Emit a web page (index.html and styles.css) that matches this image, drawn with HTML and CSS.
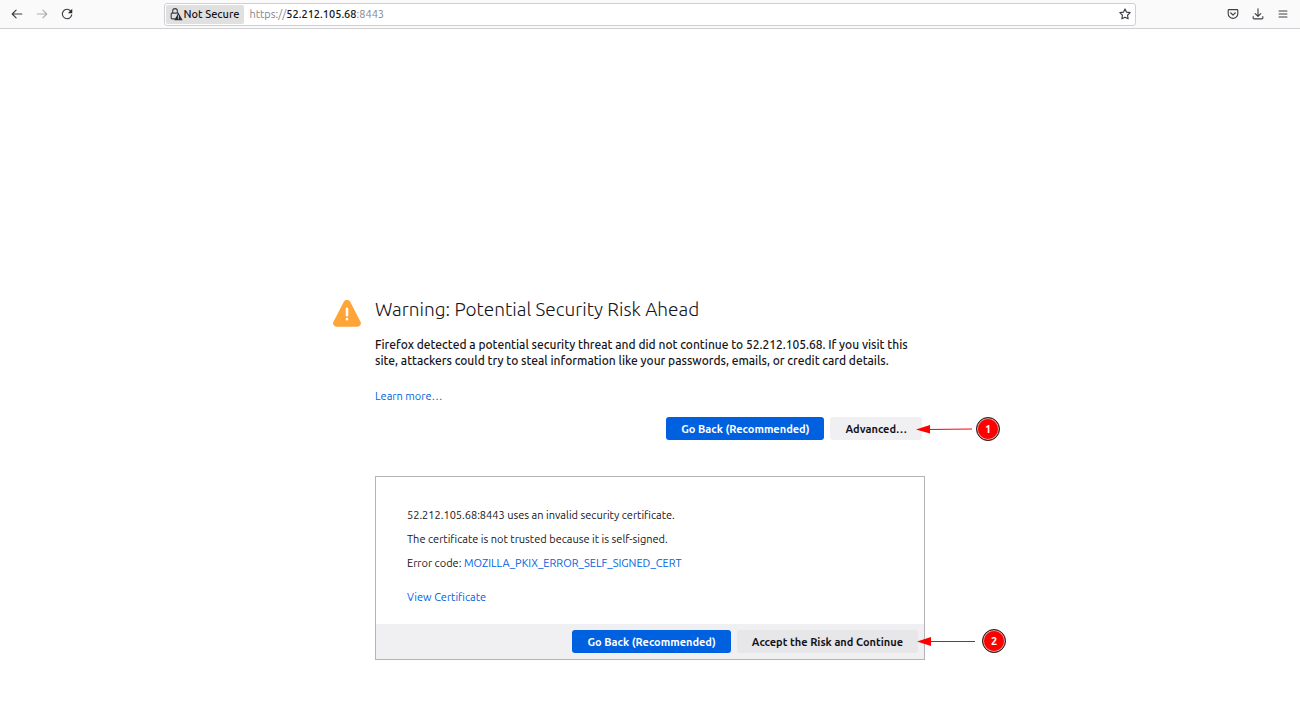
FILE: index.html
```html
<!DOCTYPE html>
<html lang="en">
<head>
    <meta charset="UTF-8" />
    <meta name="viewport" content="width=device-width, initial-scale=1" />
    <title>Warning: Potential Security Risk Ahead</title>
    <link rel="stylesheet" href="styles.css">
</head>
<body>
<header class="toolbar">
    <nav class="nav-buttons">
        <button type="button" class="icon-btn" aria-label="Back">
            <svg viewBox="0 0 16 16"><path d="M13.500 8H2.500M7 3.500 2.500 8 7 12.500"/></svg>
        </button>
        <button type="button" class="icon-btn" aria-label="Forward" disabled>
            <svg viewBox="0 0 16 16"><path d="M2.500 8h11M9 3.500 13.500 8 9 12.500"/></svg>
        </button>
        <button type="button" class="icon-btn" aria-label="Reload">
            <svg viewBox="0 0 16 16"><path d="M12.300 4.600A5.400 5.400 0 1 0 13.400 9"/><path class="solid" d="M14 2v5H9z"/></svg>
        </button>
    </nav>
    <div class="url-bar">
        <button type="button" class="identity">
            <svg viewBox="0 0 16 16">
                <path d="M7 13.500H3.500a1 1 0 0 1-1-1V8a1 1 0 0 1 1-1h7M4.200 7V4.500a2.700 2.700 0 0 1 5.400 0V7"/>
                <path class="solid" d="M10.800 6.500 15.600 15H6z"/>
                <path class="mark" d="M10.800 10v2M10.800 13.300v.2"/>
            </svg>
            Not Secure
        </button>
        <div class="url" role="textbox" aria-label="Address" contenteditable="true" spellcheck="false">https://<span class="host">52.212.105.68</span>:8443</div>
        <button type="button" class="icon-btn" aria-label="Bookmark this page">
            <svg viewBox="0 0 16 16"><path d="m8 2.200 1.800 3.700 4.100.6-3 2.900.7 4.100L8 11.600l-3.600 1.900.7-4.100-3-2.900 4.100-.6z"/></svg>
        </button>
    </div>
    <div class="tool-buttons">
        <button type="button" class="icon-btn" aria-label="Save to Pocket">
            <svg viewBox="0 0 16 16"><path d="M3.500 3h9a1 1 0 0 1 1 1v3.500a5.500 5.500 0 0 1-11 0V4a1 1 0 0 1 1-1zM5.300 6.600 8 9.200l2.700-2.600"/></svg>
        </button>
        <button type="button" class="icon-btn" aria-label="Downloads">
            <svg viewBox="0 0 16 16"><path d="M8 2v8.500M4.800 7.500 8 10.600l3.200-3.100M2.500 11v1.500a1 1 0 0 0 1 1h9a1 1 0 0 0 1-1V11"/></svg>
        </button>
        <button type="button" class="icon-btn" aria-label="Open menu">
            <svg viewBox="0 0 16 16"><path d="M3.500 4.600h9M3.500 8h9M3.500 11.400h9"/></svg>
        </button>
    </div>
</header>

<main class="error-page">
    <section class="intro">
        <svg class="warning-icon" viewBox="0 0 28 27" aria-hidden="true">
            <path class="triangle" d="M10.800 1.800a3.700 3.700 0 0 1 6.400 0l10.300 20a3.400 3.400 0 0 1-3 4.900H3.500a3.400 3.400 0 0 1-3-4.900z"/>
            <path class="bang" d="M14 8.900v6.400M14 19.100v.2"/>
        </svg>
        <h1>Warning: Potential Security Risk Ahead</h1>
        <p>Firefox detected a potential security threat and did not continue to 52.212.105.68. If you visit this site, attackers could try to steal information like your passwords, emails, or credit card details.</p>
        <a class="learn-more" href="#">Learn more…</a>
        <div class="buttons">
            <button type="button" class="btn primary">Go Back (Recommended)</button>
            <button type="button" class="btn">Advanced…</button>
            <div class="callout">
                <svg class="arrow" viewBox="0 0 56 10"><path class="shaft" d="M12 5.500 56 5"/><path class="head" d="M0 5.500 14 1v8.500z"/></svg>
                <span class="step">1</span>
            </div>
        </div>
    </section>

    <section class="advanced">
        <div class="details">
            <p>52.212.105.68:8443 uses an invalid security certificate.</p>
            <p>The certificate is not trusted because it is self-signed.</p>
            <p>Error code: <a href="#">MOZILLA_PKIX_ERROR_SELF_SIGNED_CERT</a></p>
            <a class="view-cert" href="#">View Certificate</a>
        </div>
        <div class="buttons">
            <button type="button" class="btn primary">Go Back (Recommended)</button>
            <button type="button" class="btn accept">Accept the Risk and Continue</button>
            <div class="callout">
                <svg class="arrow" viewBox="0 0 58 10"><path class="shaft" d="M12 5.500h46"/><path class="head" d="M0 5.500 14 1v9z"/></svg>
                <span class="step">2</span>
            </div>
        </div>
    </section>
</main>
</body>
</html>
```
FILE: styles.css
```css
* {
    box-sizing: border-box;
}
body {
    margin: 0;
    background-color: #fff;
    color: #15141a;
    font-family: Ubuntu, "Noto Sans", "Open Sans", sans-serif;
    font-size: 11px;
    line-height: 16px;
}
button {
    font: inherit;
    color: inherit;
    border: 0;
    cursor: pointer;
}
a {
    color: #0061e0;
    text-decoration: none;
}
a:hover {
    text-decoration: underline;
}
p {
    margin: 0;
}

.toolbar {
    display: flex;
    align-items: center;
    justify-content: space-between;
    height: 29px;
    padding: 0 10px;
    background-color: #fafafa;
    border-bottom: 1px solid #d0d0d4;
}
.nav-buttons, .tool-buttons {
    display: flex;
    gap: 11px;
}
.icon-btn {
    display: flex;
    padding: 0;
    background: none;
}
.icon-btn:disabled {
    opacity: 0.4;
}
.toolbar svg {
    width: 14px;
    height: 14px;
    fill: none;
    stroke: #3f3e48;
    stroke-width: 1.3;
    stroke-linecap: round;
    stroke-linejoin: round;
}
.toolbar .solid {
    fill: #2b2a33;
    stroke: none;
}
.toolbar .mark {
    stroke: #e0e0e1;
    stroke-width: 1;
}
.url-bar {
    display: flex;
    align-items: center;
    width: 76%;
    height: 23px;
    padding: 0 3px 0 1px;
    background-color: #fff;
    border: 1px solid #d0d0d4;
    border-radius: 3px;
}
.identity {
    display: flex;
    align-items: center;
    gap: 1px;
    height: 19px;
    padding: 0 5px 0 3px;
    background-color: #e0e0e1;
    border-radius: 2px;
    white-space: nowrap;
    font-weight: 500;
}
.url {
    flex: 1;
    margin-left: 5px;
    color: #85848c;
    outline: none;
}
.host {
    color: #15141a;
    font-weight: 500;
}

.error-page {
    width: 100%;
    max-width: 550px;
    margin: 0 auto;
    padding: 268px 0 50px;
}
.intro {
    position: relative;
}
.warning-icon {
    position: absolute;
    top: 3px;
    left: -42px;
    width: 28px;
    height: 27px;
}
.triangle {
    fill: #ffa436;
}
.bang {
    stroke: #fff;
    stroke-width: 2.6;
    stroke-linecap: round;
}
h1 {
    margin: 0;
    font-size: 19px;
    font-weight: 300;
    line-height: 24px;
}
.intro p {
    margin-top: 16px;
    padding-right: 8px;
    font-size: 12px;
    font-weight: 500;
}
.learn-more {
    display: inline-block;
    margin-top: 19px;
}
.buttons {
    position: relative;
    display: flex;
    justify-content: flex-end;
    gap: 6px;
    padding-right: 3px;
}
.intro .buttons {
    margin-top: 13px;
}
.btn {
    height: 23px;
    padding: 0 15px;
    background-color: #f0f0f2;
    border-radius: 3px;
    font-weight: 700;
    white-space: nowrap;
}
.btn.primary {
    background-color: #0061e0;
    color: #fff;
}
.btn.accept {
    background-color: #e7e7ea;
}
.callout {
    position: absolute;
    top: 0;
    left: calc(100% - 9px);
    display: flex;
    align-items: center;
    gap: 4px;
    height: 24px;
}
.arrow {
    width: 56px;
    height: 10px;
}
.shaft {
    stroke: #f00;
    stroke-width: 1;
}
.head {
    fill: #f00;
}
.step {
    width: 24px;
    height: 24px;
    border: 1px solid #222;
    border-radius: 50%;
    background-color: #f00;
    box-shadow: inset 0 0 0 1px #d8a0a0;
    color: #fff;
    font-weight: 700;
    line-height: 22px;
    text-align: center;
}

.advanced {
    margin-top: 36px;
    border: 1px solid #b4b4b8;
}
.details {
    display: flex;
    flex-direction: column;
    align-items: flex-start;
    gap: 8px;
    padding: 30px 31px 19px;
}
.view-cert {
    margin-top: 10px;
}
.advanced .buttons {
    padding: 6px 6px 6px 0;
    background-color: #f0f0f2;
}
.advanced .callout {
    top: 5px;
    left: calc(100% - 7px);
    gap: 7px;
}
.advanced .arrow {
    width: 58px;
}
```
